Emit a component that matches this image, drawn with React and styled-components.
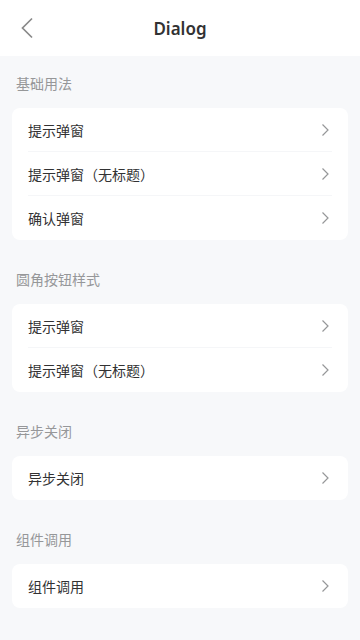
import styled, { createGlobalStyle } from "styled-components"

const Global = createGlobalStyle`
  html, body {
    margin: 0;
    padding: 0;
    background: #f7f8fa;
  }
  body {
    font-family: "Noto Sans", "Noto Sans CJK SC", sans-serif;
    -webkit-font-smoothing: antialiased;
  }
`

const sections = [
  { title: "基础用法", items: ["提示弹窗", "提示弹窗（无标题）", "确认弹窗"] },
  { title: "圆角按钮样式", items: ["提示弹窗", "提示弹窗（无标题）"] },
  { title: "异步关闭", items: ["异步关闭"] },
  { title: "组件调用", items: ["组件调用"] },
]

const Arrow = () => (
  <svg width="16" height="16" viewBox="0 0 16 16" fill="none">
    <path d="M5.5 2.5 L11 8 L5.5 13.5" stroke="#969799" strokeWidth="1.2" />
  </svg>
)

const Back = () => (
  <svg width="20" height="24" viewBox="0 0 20 24" fill="none">
    <path d="M14 2.5 L4.5 12 L14 21.5" stroke="#8a8a8a" strokeWidth="1.7" />
  </svg>
)

const App = () => {
  return (
    <Page>
      <Global />
      <NavBar>
        <BackBtn>
          <Back />
        </BackBtn>
        <Title>Dialog</Title>
      </NavBar>
      {sections.map((s, i) => (
        <Block key={s.title}>
          <BlockTitle first={i === 0}>{s.title}</BlockTitle>
          <Card>
            {s.items.map((it, j) => (
              <Cell key={j} last={j === s.items.length - 1}>
                <span>{it}</span>
                <Arrow />
              </Cell>
            ))}
          </Card>
        </Block>
      ))}
    </Page>
  )
}

export default App

const Page = styled.div`
  min-height: 640px;
  background: #f7f8fa;
`

const NavBar = styled.div`
  height: 56px;
  background: #fff;
  display: flex;
  align-items: center;
  justify-content: center;
  position: relative;
`

const BackBtn = styled.div`
  position: absolute;
  left: 18px;
  top: 16px;
  display: flex;
`

const Title = styled.h1`
  margin: 0;
  font-size: 17px;
  font-weight: 600;
  color: #323233;
`

const Block = styled.div``

const BlockTitle = styled.h2`
  margin: 0;
  padding: ${(p) => (p.first ? "20px" : "32px")} 16px 16px;
  font-size: 14px;
  line-height: 16px;
  font-weight: 400;
  color: #969799;
`

const Card = styled.div`
  margin: 0 12px;
  background: #fff;
  border-radius: 8px;
  overflow: hidden;
`

const Cell = styled.div`
  height: 44px;
  padding: 0 16px;
  display: flex;
  align-items: center;
  justify-content: space-between;
  font-size: 14px;
  color: #323233;
  position: relative;

  svg {
    margin-right: -1px;
  }

  &::after {
    content: "";
    display: ${(p) => (p.last ? "none" : "block")};
    position: absolute;
    left: 16px;
    right: 16px;
    bottom: 0;
    border-bottom: 1px solid #ebedf0;
    transform: scaleY(0.5);
  }
`
